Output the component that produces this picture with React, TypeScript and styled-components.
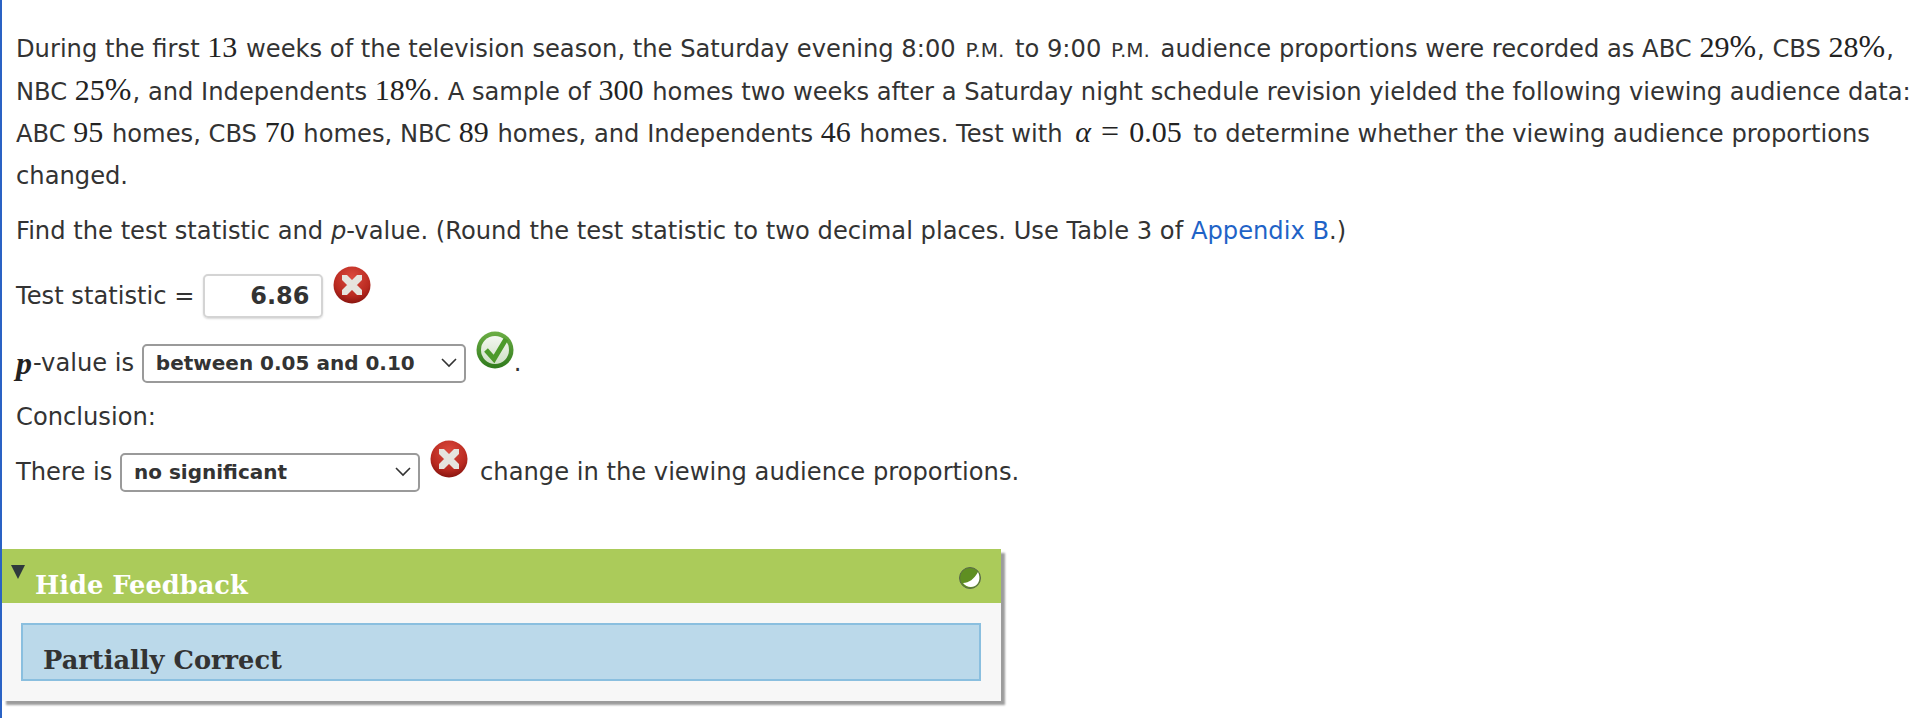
import React from "react";
import styled, { createGlobalStyle } from "styled-components";

const GlobalStyle = createGlobalStyle`
  html, body {
    margin: 0;
    padding: 0;
    background: #fff;
  }
`;

const Page = styled.div`
  box-sizing: border-box;
  width: 1910px;
  height: 718px;
  overflow: hidden;
  border-left: 2px solid #2a62c4;
  padding-top: 28px;
  color: #333;
  font-family: "DejaVu Sans", Verdana, sans-serif;
  font-size: 24.2px;
`;

const Question = styled.div`
  padding-left: 14px;
  width: 1890px;
`;

const Paragraph = styled.p<{ $gap?: number }>`
  margin: 0 0 ${(p) => p.$gap ?? 13}px;
  line-height: 42px;
  white-space: nowrap;
`;

const Num = styled.span`
  margin-right: 1px;
  font-family: "Liberation Serif", "Times New Roman", serif;
  font-size: 30px;
  line-height: 1;
  color: #222;
`;

const Equation = styled(Num)`
  margin: 0 4px 0 5px;
`;

const Percent = styled.span`
  font-size: 32px;
  line-height: 1;
`;

const Relation = styled.span`
  margin: 0 10px;
  font-size: 32px;
  line-height: 1;
`;

const MathVar = styled.i`
  margin-right: 1px;
  font-family: "Liberation Serif", "Times New Roman", serif;
  font-size: 32px;
  font-weight: bold;
  line-height: 1;
  color: #222;
`;

const SmallCaps = styled.span`
  margin: 0 3px 0 2px;
  font-size: 20px;
`;

const Link = styled.a`
  color: #1f63c7;
  text-decoration: none;
`;

const Row = styled.div<{ $height: number }>`
  display: flex;
  align-items: center;
  height: ${(p) => p.$height}px;
  white-space: pre;
`;

const AnswerInput = styled.div`
  box-sizing: border-box;
  width: 120px;
  height: 44px;
  margin-left: 8px;
  padding-right: 11px;
  border: 2px solid #d4d4d4;
  border-radius: 5px;
  text-align: right;
  line-height: 40px;
  font-weight: bold;
  font-size: 24px;
  box-shadow: 0 1px 2px rgba(0, 0, 0, 0.15);
`;

const Select = styled.div<{ $width: number }>`
  box-sizing: border-box;
  display: flex;
  align-items: center;
  justify-content: space-between;
  width: ${(p) => p.$width}px;
  height: 39px;
  padding: 0 5px 0 12px;
  border: 2px solid #9a9a9a;
  border-radius: 5px;
  font-size: 20px;
  font-weight: bold;
`;

const Mark = styled.svg<{ $top: number; $after?: number }>`
  flex: none;
  width: 38px;
  height: 38px;
  margin: 0 ${(p) => p.$after ?? 0}px 0 10px;
  transform: translateY(${(p) => p.$top}px);
`;

const Panel = styled.section`
  box-sizing: border-box;
  width: 999px;
  height: 152px;
  margin-top: 40px;
  background: #f7f7f7;
  box-shadow: 4px 4px 2px #9c9c9c;
`;

const PanelHeader = styled.header`
  position: relative;
  height: 54px;
  box-sizing: border-box;
  padding: 19px 0 0 33px;
  background: #abcb5a;
  box-shadow: -2px 0 0 #c4c4b8;
  color: #fff;
  font-family: "DejaVu Serif", Georgia, serif;
  font-size: 25.7px;
  font-weight: bold;
  line-height: 34px;
`;

const Arrow = styled.span`
  position: absolute;
  left: 9px;
  top: 16px;
  width: 0;
  height: 0;
  border-left: 7px solid transparent;
  border-right: 7px solid transparent;
  border-top: 14px solid #2f3a3c;
`;

const Toggle = styled.svg`
  position: absolute;
  right: 20px;
  top: 18px;
  width: 22px;
  height: 22px;
`;

const PanelBody = styled.div`
  padding: 20px 20px 0 19px;
`;

const Status = styled.div`
  box-sizing: border-box;
  height: 58px;
  padding: 16px 0 0 20px;
  border: 2px solid #8abfdf;
  background: #bbd9ea;
  font-family: "DejaVu Serif", Georgia, serif;
  font-size: 25.7px;
  font-weight: bold;
  line-height: 38px;
`;

const Chevron = () => (
  <svg width="20" height="12" viewBox="0 0 20 12" fill="none">
    <path d="M3 2l7 7 7-7" stroke="#333" strokeWidth="1.6" />
  </svg>
);

const Wrong = ({ top, after }: { top: number; after?: number }) => (
  <Mark $top={top} $after={after} viewBox="0 0 38 38">
    <defs>
      <radialGradient id="redBall" cx="0.5" cy="0.3" r="0.75">
        <stop offset="0" stopColor="#dc4a3e" />
        <stop offset="0.65" stopColor="#b92a20" />
        <stop offset="1" stopColor="#7e100c" />
      </radialGradient>
      <filter id="soft">
        <feGaussianBlur stdDeviation="0.7" />
      </filter>
    </defs>
    <circle cx="19" cy="19" r="18.5" fill="url(#redBall)" />
    <path
      d="M11 11l16 16M27 11L11 27"
      stroke="#e6e4de"
      strokeWidth="7"
      strokeLinecap="round"
      filter="url(#soft)"
    />
  </Mark>
);

const Right = ({ top }: { top: number }) => (
  <Mark $top={top} viewBox="0 0 38 38">
    <defs>
      <linearGradient id="greenBall" x1="0" y1="0" x2="0" y2="1">
        <stop offset="0" stopColor="#6cae45" />
        <stop offset="1" stopColor="#2f7a1c" />
      </linearGradient>
      <linearGradient id="greenFace" x1="0" y1="0" x2="0" y2="1">
        <stop offset="0" stopColor="#f4f7f1" />
        <stop offset="1" stopColor="#cfe0c6" />
      </linearGradient>
    </defs>
    <circle cx="19" cy="19" r="18.5" fill="url(#greenBall)" />
    <circle cx="19" cy="19" r="14" fill="url(#greenFace)" />
    <path d="M10 19l8 9L30 8" fill="none" stroke="#4c9a2a" strokeWidth="5" />
  </Mark>
);

const App: React.FC = () => {
  return (
    <>
      <GlobalStyle />
      <Page>
        <Question>
          <Paragraph>
            During the first <Num>13</Num> weeks of the television season, the Saturday evening 8:00{" "}
            <SmallCaps>P.M.</SmallCaps> to 9:00 <SmallCaps>P.M.</SmallCaps> audience proportions were recorded as ABC{" "}
            <Num>29<Percent>%</Percent></Num>, CBS <Num>28<Percent>%</Percent></Num>,
            <br />
            NBC <Num>25<Percent>%</Percent></Num>, and Independents <Num>18<Percent>%</Percent></Num>. A sample of{" "}
            <Num>300</Num> homes two weeks after a Saturday night schedule revision yielded the following viewing
            audience data:
            <br />
            ABC <Num>95</Num> homes, CBS <Num>70</Num> homes, NBC <Num>89</Num> homes, and Independents <Num>46</Num>{" "}
            homes. Test with <Equation><i>α</i><Relation>=</Relation>0.05</Equation> to determine whether the viewing
            audience proportions
            <br />
            changed.
          </Paragraph>
          <Paragraph $gap={13}>
            Find the test statistic and <i>p</i>-value. (Round the test statistic to two decimal places. Use Table 3 of{" "}
            <Link>Appendix B</Link>.)
          </Paragraph>
          <Row $height={62}>
            Test statistic =<AnswerInput>6.86</AnswerInput>
            <Wrong top={-11} />
          </Row>
          <Row $height={72}>
            <MathVar>p</MathVar>-value is{" "}
            <Select $width={324}>
              between 0.05 and 0.10
              <Chevron />
            </Select>
            <Right top={-13} />.
          </Row>
          <Row $height={36}>Conclusion:</Row>
          <Row $height={74}>
            There is{" "}
            <Select $width={300}>
              no significant
              <Chevron />
            </Select>
            <Wrong top={-13} after={12} />
            change in the viewing audience proportions.
          </Row>
        </Question>
        <Panel>
          <PanelHeader>
            <Arrow />
            Hide Feedback
            <Toggle viewBox="0 0 22 22">
              <circle cx="11" cy="11" r="10.5" fill="#5f8f22" stroke="#59694a" />
              <path d="M4 16C10 16 15 12 19 5c3 6 1 12-3 14-4 2-9 1-12-3z" fill="#fff" />
            </Toggle>
          </PanelHeader>
          <PanelBody>
            <Status>Partially Correct</Status>
          </PanelBody>
        </Panel>
      </Page>
    </>
  );
};

export default App;
